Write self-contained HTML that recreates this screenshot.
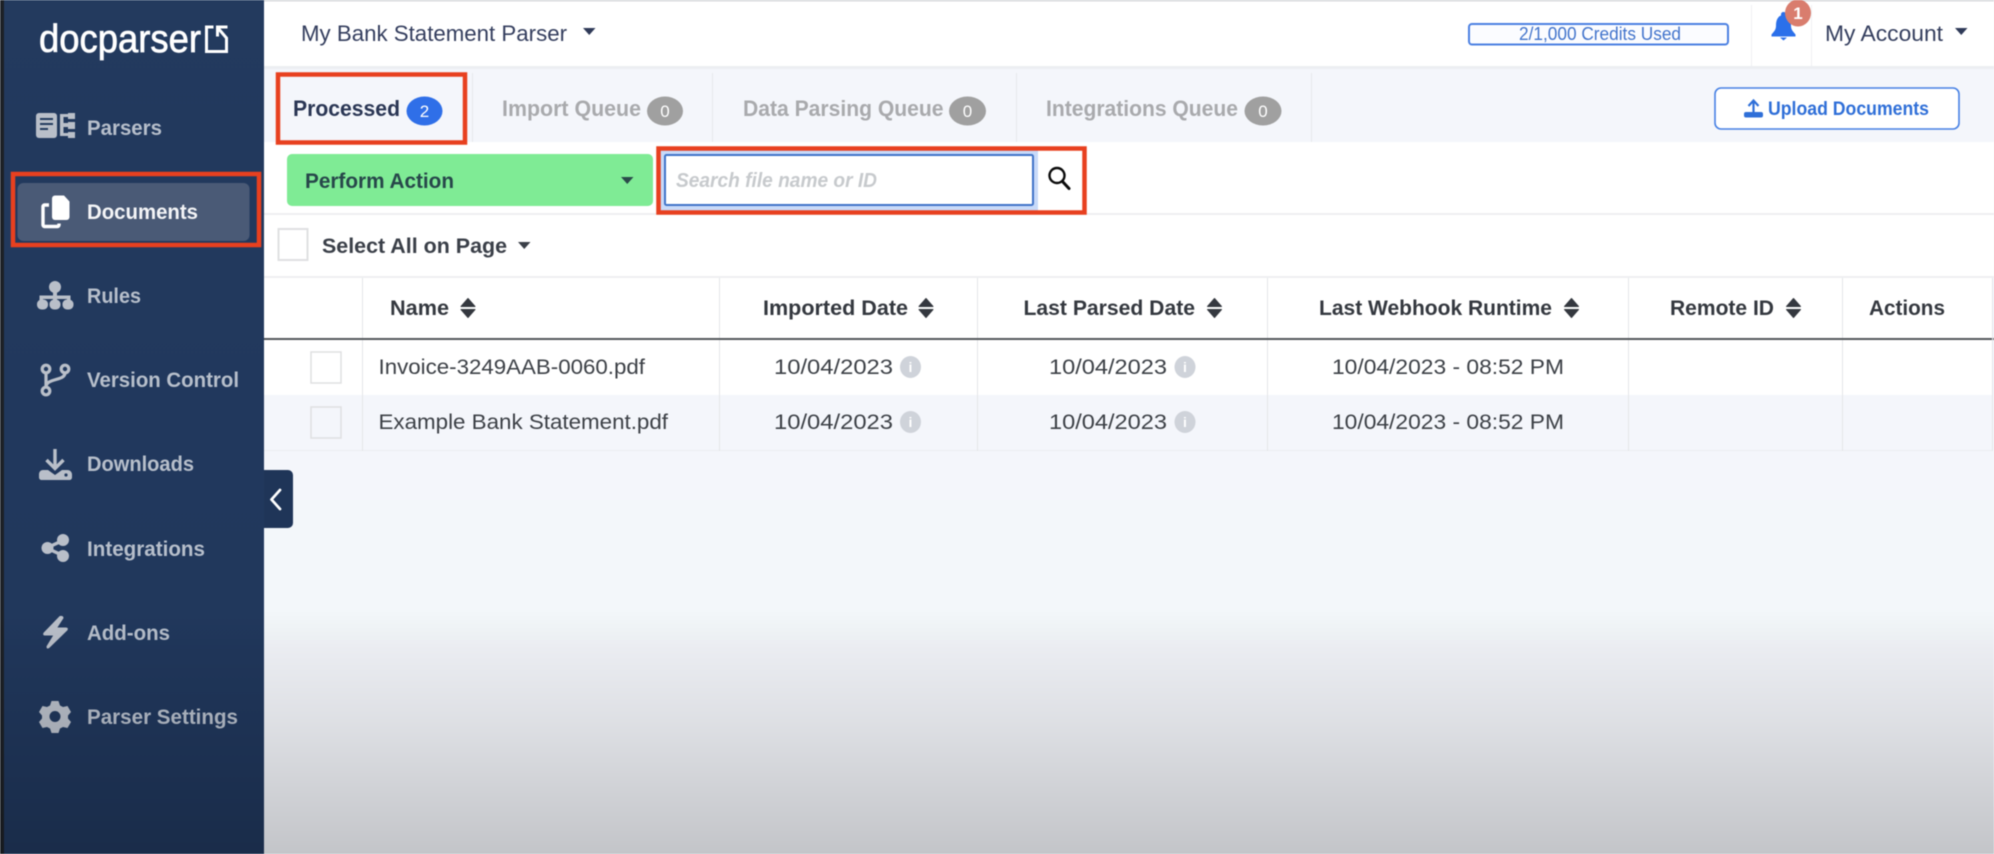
<!DOCTYPE html>
<html><head><meta charset="utf-8"><title>Docparser</title>
<style>
html,body{margin:0;padding:0;width:1994px;height:854px;overflow:hidden;background:#f4f6fb}
svg{display:block;filter:blur(.45px)}
text{font-family:"Liberation Sans",sans-serif}
.b{font-weight:bold}
.nav{font-weight:bold;font-size:21px;fill:#b7bfcb}
.tab{font-weight:bold;font-size:22px;fill:#a9aaad}
.th{font-weight:bold;font-size:21px;fill:#34383f}
.td{font-size:21.500px;fill:#3c4046}
.dig{font-size:17px;fill:#fff;text-anchor:middle}
.ic{fill:#b9bfc9}
.info{font-weight:bold;font-size:14px;fill:#fff;text-anchor:middle}
</style></head><body>
<svg width="1994" height="854" viewBox="0 0 1994 854" xmlns="http://www.w3.org/2000/svg">
<defs>
<linearGradient id="ov" x1="0" y1="0" x2="0" y2="1">
<stop offset="0" stop-color="#000" stop-opacity="0"/>
<stop offset=".16" stop-color="#000" stop-opacity=".04"/>
<stop offset=".45" stop-color="#000" stop-opacity=".09"/>
<stop offset="1" stop-color="#000" stop-opacity=".2"/>
</linearGradient>
<linearGradient id="side" x1="0" y1="0" x2="0" y2="1">
<stop offset="0" stop-color="#233a5e"/><stop offset="1" stop-color="#20375c"/>
</linearGradient>
<path id="caret" d="M0 0h12.500l-6.250 7z"/>
<path id="sort" d="M7.500 0.500L14.500 8.500H0.500zM0.500 11.500H14.500L7.500 19.500z" stroke-linejoin="round" stroke-width="1" stroke="#34383f"/>
</defs>

<rect width="1994" height="854" fill="#f4f6fb"/>
<rect x="264" y="500" width="1730" height="140" fill="#f3f7fa"/>
<!-- header -->
<rect x="264" y="0" width="1730" height="67" fill="#fff"/>
<rect x="264" y="0" width="1730" height="1.500" fill="#d9dadc"/>
<rect x="264" y="66" width="1730" height="3" fill="#eceef2"/>
<text x="301" y="41" font-size="22" fill="#343e5e" textLength="266" lengthAdjust="spacingAndGlyphs">My Bank Statement Parser</text>
<use href="#caret" x="583" y="28" fill="#2f3a58"/>
<rect x="1469" y="24" width="259" height="20.500" rx="3" fill="#fbfcff" stroke="#4b80e2" stroke-width="2"/>
<text x="1519" y="40" font-size="18" fill="#4274cc" textLength="162" lengthAdjust="spacingAndGlyphs">2/1,000 Credits Used</text>
<rect x="1751" y="5" width="1" height="61" fill="#eff0f3"/>
<rect x="1811" y="5" width="1" height="61" fill="#eff0f3"/>
<path d="M1783.500 12c-1.500 0-2.500 1-2.500 2.500v1c-4 1.500-5 6-5 10 0 4-1.500 5.500-4.500 9v2h24v-2c-3-3.500-4.500-5-4.500-9 0-4-1-8.500-5-10v-1c0-1.500-1-2.500-2.500-2.500z" fill="#2b70ea"/>
<path d="M1780 37.500h7l-3.500 3z" fill="#2b70ea"/>
<ellipse cx="1798" cy="13" rx="13" ry="13.500" fill="#d97d6e"/>
<text x="1798" y="19" class="dig b" font-size="16">1</text>
<text x="1825" y="41" font-size="22" fill="#343e5e" textLength="118" lengthAdjust="spacingAndGlyphs">My Account</text>
<use href="#caret" x="1955" y="28" fill="#2f3a58"/>

<!-- tabs -->
<rect x="264" y="69" width="1730" height="73" fill="#f4f6fb"/>
<rect x="472" y="73" width="1" height="69" fill="#e6e8ec"/>
<rect x="712" y="73" width="1" height="69" fill="#e6e8ec"/>
<rect x="1016" y="73" width="1" height="69" fill="#e6e8ec"/>
<rect x="1311" y="73" width="1" height="69" fill="#e6e8ec"/>
<text x="293" y="116" class="tab" style="fill:#2a3654" textLength="107" lengthAdjust="spacingAndGlyphs">Processed</text>
<ellipse cx="424.500" cy="111" rx="18" ry="14.500" fill="#2f6fe8"/>
<text x="424.500" y="117" class="dig">2</text>
<text x="502" y="116" class="tab" textLength="139" lengthAdjust="spacingAndGlyphs">Import Queue</text>
<ellipse cx="665" cy="111" rx="18" ry="14.500" fill="#a0a0a0"/>
<text x="665" y="117" class="dig">0</text>
<text x="743" y="116" class="tab" textLength="200.500" lengthAdjust="spacingAndGlyphs">Data Parsing Queue</text>
<ellipse cx="967.500" cy="111" rx="18.500" ry="14.500" fill="#a0a0a0"/>
<text x="967.500" y="117" class="dig">0</text>
<text x="1046" y="116" class="tab" textLength="192" lengthAdjust="spacingAndGlyphs">Integrations Queue</text>
<ellipse cx="1263" cy="111" rx="18.500" ry="14.500" fill="#a0a0a0"/>
<text x="1263" y="117" class="dig">0</text>
<rect x="1715" y="88" width="244" height="41" rx="6" fill="#fff" stroke="#4680e4" stroke-width="1.600"/>
<path d="M1753.500 100.500v12M1748.500 106l5-5.500 5 5.500" fill="none" stroke="#2f6fd8" stroke-width="2.200"/>
<rect x="1744" y="112" width="19" height="5.500" rx="2" fill="#2f6fd8"/>
<text x="1768" y="115" class="b" font-size="19" fill="#2f6fd8" textLength="161" lengthAdjust="spacingAndGlyphs">Upload Documents</text>

<!-- toolbar -->
<rect x="264" y="142" width="1730" height="136" fill="#fff"/>
<rect x="264" y="213" width="1730" height="2" fill="#eeeff1"/>
<rect x="264" y="276" width="1730" height="2" fill="#eeeff1"/>
<rect x="287" y="154" width="366" height="52" rx="5" fill="#7feb95"/>
<text x="305" y="188" class="b" font-size="21" fill="#27474a" textLength="149" lengthAdjust="spacingAndGlyphs">Perform Action</text>
<use href="#caret" x="621" y="177" fill="#2b4a4a"/>
<rect x="660" y="150" width="378" height="61" fill="#c8daf9"/>
<rect x="665" y="155" width="368" height="50" rx="1.500" fill="#fff" stroke="#3f73c8" stroke-width="2"/>
<text x="676" y="187" class="b" font-size="20" font-style="italic" fill="#c7cacd" textLength="201" lengthAdjust="spacingAndGlyphs">Search file name or ID</text>
<circle cx="1057" cy="175.500" r="7.500" fill="none" stroke="#0b0b0b" stroke-width="2.400"/>
<path d="M1062.500 181.500l6.500 7" stroke="#0b0b0b" stroke-width="3" stroke-linecap="round"/>
<rect x="278.500" y="229" width="29" height="31" fill="#fff" stroke="#dfe0e2" stroke-width="2"/>
<text x="322" y="253" class="b" font-size="21" fill="#3a3f48" textLength="185" lengthAdjust="spacingAndGlyphs">Select All on Page</text>
<use href="#caret" x="518" y="242" fill="#3a3f48"/>

<!-- table -->
<rect x="264" y="278" width="1728" height="60" fill="#fff"/>
<rect x="264" y="340" width="1728" height="55" fill="#fff"/>
<rect x="264" y="395" width="1728" height="56" fill="#f4f6fb"/>
<rect x="264" y="450" width="1728" height="1" fill="#eceef1"/>
<rect x="264" y="338" width="1730" height="2" fill="#55585c"/>
<g fill="#e4e6e9">
<rect x="362" y="278" width="1" height="60"/><rect x="362" y="340" width="1" height="111"/>
<rect x="719" y="278" width="1" height="60"/><rect x="719" y="340" width="1" height="111"/>
<rect x="977" y="278" width="1" height="60"/><rect x="977" y="340" width="1" height="111"/>
<rect x="1267" y="278" width="1" height="60"/><rect x="1267" y="340" width="1" height="111"/>
<rect x="1628" y="278" width="1" height="60"/><rect x="1628" y="340" width="1" height="111"/>
<rect x="1842" y="278" width="1" height="60"/><rect x="1842" y="340" width="1" height="111"/>
<rect x="1992" y="278" width="1" height="173"/>
</g>
<text x="390" y="315" class="th" textLength="59" lengthAdjust="spacingAndGlyphs">Name</text>
<use href="#sort" x="460.500" y="298" fill="#34383f"/>
<text x="763" y="315" class="th" textLength="145" lengthAdjust="spacingAndGlyphs">Imported Date</text>
<use href="#sort" x="918.500" y="298" fill="#34383f"/>
<text x="1023.500" y="315" class="th" textLength="171.500" lengthAdjust="spacingAndGlyphs">Last Parsed Date</text>
<use href="#sort" x="1207" y="298" fill="#34383f"/>
<text x="1319" y="315" class="th" textLength="233" lengthAdjust="spacingAndGlyphs">Last Webhook Runtime</text>
<use href="#sort" x="1564" y="298" fill="#34383f"/>
<text x="1670" y="315" class="th" textLength="104" lengthAdjust="spacingAndGlyphs">Remote ID</text>
<use href="#sort" x="1786" y="298" fill="#34383f"/>
<text x="1869" y="315" class="th" textLength="76" lengthAdjust="spacingAndGlyphs">Actions</text>

<rect x="311" y="352" width="30" height="31" fill="#fff" stroke="#dfe0e2" stroke-width="1.500"/>
<rect x="311" y="407" width="30" height="31" fill="#f4f6fb" stroke="#dfe0e2" stroke-width="1.500"/>
<text x="378.500" y="374" class="td" textLength="266.500" lengthAdjust="spacingAndGlyphs">Invoice-3249AAB-0060.pdf</text>
<text x="378.500" y="429" class="td" textLength="289.500" lengthAdjust="spacingAndGlyphs">Example Bank Statement.pdf</text>
<text x="774" y="374" class="td" textLength="119" lengthAdjust="spacingAndGlyphs">10/04/2023</text>
<text x="774" y="429" class="td" textLength="119" lengthAdjust="spacingAndGlyphs">10/04/2023</text>
<text x="1049" y="374" class="td" textLength="118" lengthAdjust="spacingAndGlyphs">10/04/2023</text>
<text x="1049" y="429" class="td" textLength="118" lengthAdjust="spacingAndGlyphs">10/04/2023</text>
<text x="1332" y="374" class="td" textLength="232" lengthAdjust="spacingAndGlyphs">10/04/2023 - 08:52 PM</text>
<text x="1332" y="429" class="td" textLength="232" lengthAdjust="spacingAndGlyphs">10/04/2023 - 08:52 PM</text>
<ellipse cx="910.500" cy="367" rx="10.500" ry="11" fill="#cfd3da"/><text x="910.500" y="372" class="info">i</text>
<ellipse cx="910.500" cy="422" rx="10.500" ry="11" fill="#cfd3da"/><text x="910.500" y="427" class="info">i</text>
<ellipse cx="1185" cy="367" rx="10.500" ry="11" fill="#cfd3da"/><text x="1185" y="372" class="info">i</text>
<ellipse cx="1185" cy="422" rx="10.500" ry="11" fill="#cfd3da"/><text x="1185" y="427" class="info">i</text>

<!-- sidebar -->
<rect x="0" y="0" width="4" height="854" fill="#1d2127"/>
<rect x="4" y="0" width="260" height="854" fill="url(#side)"/>
<rect x="264" y="470" width="29" height="58" rx="5" fill="#1f3558"/>
<rect x="264" y="470" width="8" height="58" fill="#1f3558"/>
<path d="M280 490l-8.500 9.500 8.500 9.500" fill="none" stroke="#fff" stroke-width="2.800" stroke-linecap="round" stroke-linejoin="round"/>

<!-- logo -->
<text x="39" y="52" font-size="38.500" fill="#fff" stroke="#fff" stroke-width=".7" textLength="162" lengthAdjust="spacingAndGlyphs">docparser</text>
<path d="M213.500 27H206.500V51.500H226.500V38L217.500 27.500" fill="none" stroke="#fff" stroke-width="3"/>
<path d="M217.500 36.500V27H227.500" fill="none" stroke="#fff" stroke-width="3"/>

<!-- active nav -->
<rect x="17.500" y="183" width="232" height="58" rx="6" fill="#4a5a76"/>

<!-- nav icons -->
<g class="ic">
<rect x="36" y="113" width="21" height="25" rx="3"/>
<path d="M60 114h3.500v22H60zM60 123h8v4h-8zM60 114h8v3h-8zM60 133h8v3h-8z"/>
<rect x="68" y="113" width="7" height="6"/><rect x="68" y="122" width="7" height="7"/><rect x="68" y="132" width="7" height="6"/>
<circle cx="55" cy="287" r="6"/>
<path d="M53 290h4v5.500h13.500v6h-3.500v-2.500H57v2.500h-4v-2.500H43v2.500h-3.500v-6H53z"/>
<rect x="37" y="299.500" width="11" height="10" rx="4.500"/><rect x="49.500" y="299.500" width="11" height="10" rx="4.500"/><rect x="62.500" y="299.500" width="11" height="10" rx="4.500"/>
<path d="M43 470h5l7 5 7-5h5.500c2.500 0 4.500 2 4.500 4.500V477c0 2-1 3-3 3H42c-2 0-3-1-3-3v-2.500c0-2.500 1.500-4.500 4-4.500z"/>
<circle cx="47.500" cy="548" r="6"/><circle cx="63" cy="540" r="6"/><circle cx="63" cy="556" r="6"/>
<path d="M47 546l15-7 1.500 3-15 7zM47 550l1.500-3 15 7-1.500 3z"/>
<path d="M60 616.500L44 633q-1 2 1 2H54L47 646.500q0 2.500 2 1L67 630q1-2-1-2H56.500L63 618q0-2-3-1.500z" stroke="#b9bfc9" stroke-width="1"/>
<path fill-rule="evenodd" d="M51.500 701h7l1.500 4.500 3 1.500 4.500-1 3.500 6-3 3.500v3l3 3.500-3.500 6-4.500-1-3 1.500-1.500 4.500h-7l-1.500-4.500-3-1.500-4.500 1-3.500-6 3-3.500v-3l-3-3.500 3.500-6 4.500 1 3-1.500zM55 711a5.500 5.500 0 1 0 0 11 5.500 5.500 0 0 0 0-11z"/>
</g>
<path d="M55 449v19M46.500 460l8.500 8.500 8.500-8.500" fill="none" stroke="#b9bfc9" stroke-width="3.400"/>
<path d="M40 119h13M40 124h13M40 129h8" stroke="#233a5e" stroke-width="2"/>
<circle cx="66" cy="475" r="1.600" fill="#233a5e"/>
<g fill="none" stroke="#b9bfc9" stroke-width="3.200">
<circle cx="46" cy="369" r="3.800"/><circle cx="46" cy="391" r="3.800"/><circle cx="65" cy="369" r="3.800"/>
<path d="M46 373v14M65 373c0 8-19 5-19 14"/>
</g>
<!-- documents icon -->
<path d="M55 195.500h9l5.500 6v15.500a3 3 0 0 1-3 3H55a3 3 0 0 1-3-3v-18.500a3 3 0 0 1 3-3z" fill="#fff"/>
<path d="M49 205h-4.500a1.500 1.500 0 0 0-1.500 1.500v18.500a1.500 1.500 0 0 0 1.500 1.500h13a1.500 1.500 0 0 0 1.500-1.500v-1.500" fill="none" stroke="#fff" stroke-width="3.400"/>

<!-- nav text -->
<text x="87" y="135" class="nav" textLength="75" lengthAdjust="spacingAndGlyphs">Parsers</text>
<text x="87" y="219" class="nav" style="fill:#f4f5f7" textLength="111" lengthAdjust="spacingAndGlyphs">Documents</text>
<text x="87" y="303" class="nav" textLength="54" lengthAdjust="spacingAndGlyphs">Rules</text>
<text x="87" y="387" class="nav" textLength="152" lengthAdjust="spacingAndGlyphs">Version Control</text>
<text x="87" y="471" class="nav" textLength="107" lengthAdjust="spacingAndGlyphs">Downloads</text>
<text x="87" y="556" class="nav" textLength="118" lengthAdjust="spacingAndGlyphs">Integrations</text>
<text x="87" y="640" class="nav" textLength="83" lengthAdjust="spacingAndGlyphs">Add-ons</text>
<text x="87" y="724" class="nav" textLength="151" lengthAdjust="spacingAndGlyphs">Parser Settings</text>

<!-- annotation boxes -->
<g fill="none" stroke="#e8401f" stroke-width="4.500">
<rect x="13" y="174" width="246" height="71"/>
<rect x="278" y="74.500" width="187" height="68"/>
<rect x="658.500" y="148.500" width="426" height="64"/>
</g>

<!-- fade -->
<rect x="0" y="610" width="1994" height="244" fill="url(#ov)"/>
</svg>
</body></html>
